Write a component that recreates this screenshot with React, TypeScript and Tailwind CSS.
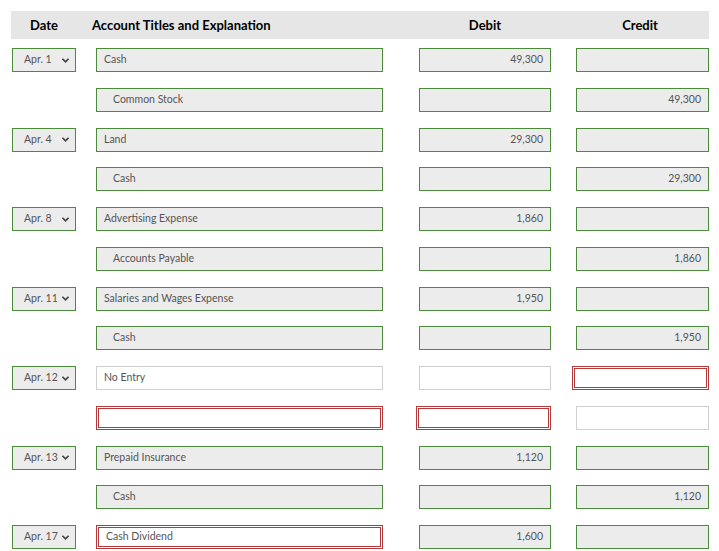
import React from "react";

type Row = { date?: string; acct: string; indent?: boolean; debit?: string; credit?: string; kind?: "green" | "noentry" | "red" | "cashdiv" };
const rows: Row[] = [
  { date: "Apr. 1", acct: "Cash", debit: "49,300" },
  { acct: "Common Stock", indent: true, credit: "49,300" },
  { date: "Apr. 4", acct: "Land", debit: "29,300" },
  { acct: "Cash", indent: true, credit: "29,300" },
  { date: "Apr. 8", acct: "Advertising Expense", debit: "1,860" },
  { acct: "Accounts Payable", indent: true, credit: "1,860" },
  { date: "Apr. 11", acct: "Salaries and Wages Expense", debit: "1,950" },
  { acct: "Cash", indent: true, credit: "1,950" },
  { date: "Apr. 12", acct: "No Entry", kind: "noentry" },
  { acct: "", kind: "red" },
  { date: "Apr. 13", acct: "Prepaid Insurance", debit: "1,120" },
  { acct: "Cash", indent: true, credit: "1,120" },
  { date: "Apr. 17", acct: "Cash Dividend", debit: "1,600", kind: "cashdiv" },
];

const green = "border border-[#4b8b3b] bg-[#ececec]";
const plain = "border border-[#cfcfcf] bg-white";
const red = "border-[3px] border-double border-[#b23a3a] bg-white";

export default function App() {
  return (
    <div className="w-[719px] h-[551px] bg-white overflow-hidden text-[#555]" style={{ fontFamily: "Lato, 'Liberation Sans', sans-serif" }}>
      <div className="pt-[11px] pl-[11px] w-[709px]">
        <div className="h-[28px] pt-[1px] bg-[#e6e6e6] flex items-center text-[13px] font-bold text-black">
          <div className="w-[66px] text-center">Date</div>
          <div className="w-[322px] pl-[15px]">Account Titles and Explanation</div>
          <div className="w-[172px] text-center">Debit</div>
          <div className="w-[138px] text-center">Credit</div>
        </div>
        <div className="pt-[9px]">
          {rows.map((r, i) => {
            const k = r.kind;
            const acctCls = k === "noentry" ? plain : k === "red" || k === "cashdiv" ? red : green;
            const debCls = k === "noentry" ? plain : k === "red" ? red : green;
            const credCls = k === "noentry" ? red : k === "red" ? plain : green;
            return (
              <div key={i} className="h-[39.75px] flex items-start text-[10.5px]">
                <div className="w-[85px]">
                  {r.date && (
                    <div className="ml-[1px] w-[64px] h-[24px] border border-[#4b8b3b] bg-[#ececec] flex items-center justify-between pl-[11px] pr-[5px]">
                      <span>{r.date}</span>
                      <svg width="9" height="7" viewBox="0 0 10 8"><path d="M1.5 2 L5 5.5 L8.5 2" stroke="#444" strokeWidth="2" fill="none" /></svg>
                    </div>
                  )}
                </div>
                <div className={`w-[287px] h-[24px] flex items-center ${acctCls} ${r.indent ? "pl-[16px]" : "pl-[7px]"}`}>{r.acct}</div>
                <div className={`${k === "red" ? "ml-[33px] w-[135px]" : "ml-[36px] w-[132px]"} h-[24px] flex items-center justify-end pr-[7px] ${debCls}`}>{r.debit}</div>
                <div className={`${k === "noentry" ? "ml-[21px] w-[137px]" : "ml-[25px] w-[133px]"} h-[24px] flex items-center justify-end pr-[7px] ${credCls}`}>{r.credit}</div>
              </div>
            );
          })}
        </div>
      </div>
    </div>
  );
}
